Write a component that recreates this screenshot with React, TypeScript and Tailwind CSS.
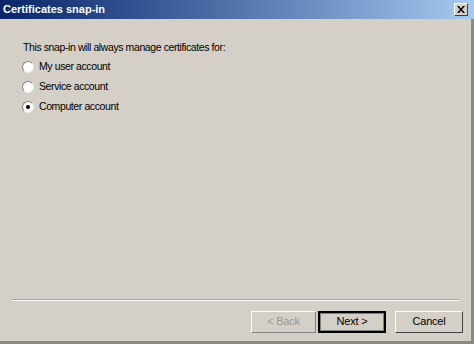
export default function App() {
  const options = [
    { label: 'My user account', checked: false },
    { label: 'Service account', checked: false },
    { label: 'Computer account', checked: true },
  ]

  return (
    <div className="w-[474px] h-[344px] bg-[#d4d0c8] flex flex-col overflow-hidden text-[10.5px] tracking-[-0.4px] text-black" style={{ fontFamily: '"Liberation Sans", Arial, sans-serif' }}>
      {/* Title bar */}
      <div className="h-[19px] shrink-0 flex items-center justify-between pl-[3px] pr-[6px] bg-gradient-to-r from-[#0a246a] to-[#a6caf0]">
        <span className="text-white font-bold text-[11px] tracking-normal leading-none">Certificates snap-in</span>
        <button className="w-[14px] h-[13px] bg-[#d4d0c8] border border-t-white border-l-white border-r-[#404040] border-b-[#404040] flex items-center justify-center">
          <svg width="8" height="7" viewBox="0 0 8 7">
            <path d="M0 0h2l2 2.5 2-2.5h2l-3 3.5 3 3.5h-2l-2-2.5-2 2.5h-2l3-3.5z" fill="#000" />
          </svg>
        </button>
      </div>

      <div className="flex-1 flex min-h-0">
        <div className="flex-1 flex flex-col">
          {/* Body */}
          <div className="flex-1 pl-[23px] pt-[22px]">
            <p className="leading-[13px]">This snap-in will always manage certificates for:</p>
            <div className="mt-[6px] flex flex-col gap-[7px] -ml-[1px]">
              {options.map(o => (
                <label key={o.label} className="flex items-center gap-[5px] h-[13px]">
                  <span className="w-[12px] h-[12px] rounded-full bg-white border border-t-[#808080] border-l-[#808080] border-r-[#ece9e2] border-b-[#ece9e2] flex items-center justify-center">
                    {o.checked && <span className="w-[4px] h-[4px] rounded-full bg-black" />}
                  </span>
                  <span>{o.label}</span>
                </label>
              ))}
            </div>
          </div>

          {/* Separator */}
          <div className="mx-[12px] h-[2px] border-t border-t-[#a0a0a0] border-b border-b-white" />

          {/* Buttons */}
          <div className="flex justify-end items-center gap-[2px] pt-[9px] pb-[8px] pr-[8px] h-[40px] text-[11px] tracking-[-0.2px]">
            <button disabled className="w-[65px] h-[22px] bg-[#d4d0c8] border border-t-white border-l-white border-r-[#808080] border-b-[#808080] text-[#9a9890]">
              &lt; Back
            </button>
            <button className="w-[68px] h-[22px] bg-[#d4d0c8] border-2 border-black outline outline-1 outline-[#808080] -outline-offset-3">
              Next &gt;
            </button>
            <button className="ml-[7px] w-[68px] h-[22px] bg-[#d4d0c8] border border-t-white border-l-white border-r-[#404040] border-b-[#404040]">
              Cancel
            </button>
          </div>
        </div>
        <div className="w-[3px] bg-[#8c8a85]" />
      </div>
      <div className="h-[3px] shrink-0 bg-[#8c8a85]" />
    </div>
  )
}
